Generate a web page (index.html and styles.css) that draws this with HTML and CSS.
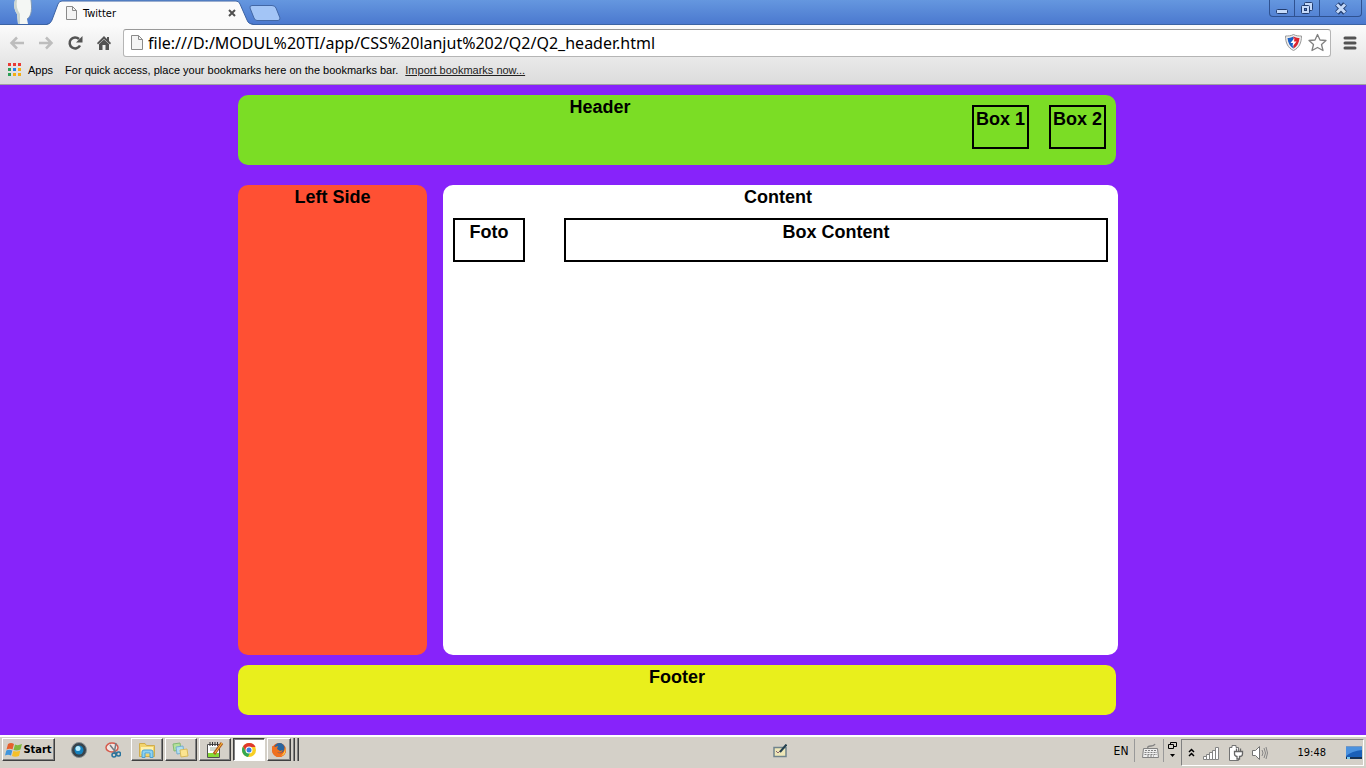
FILE: index.html
```html
<!DOCTYPE html>
<html lang="en">
<head>
    <meta charset="UTF-8">
    <meta name="viewport" content="width=device-width, initial-scale=1.0">
    <title>Twitter</title>
    <link rel="stylesheet" href="styles.css">
</head>
<body>

<!-- browser window -->
<div class="titlebar">
    <svg class="profile" width="24" height="24" viewBox="0 0 24 24">
        <path d="M3 0C1 6 3 11 5 14L6 24H16L15 19C20 16 20 8 19 0Z" fill="#f4f7f4"/>
        <path d="M3 0C1 6 3 11 5 14L6 24H8L8 14C5 10 4 5 5 0Z" fill="#cbd5cf"/>
        <path d="M19 0C20 8 20 16 15 19" fill="none" stroke="#7f98b5"/>
    </svg>
    <div class="tab">
        <svg class="tab-shape" width="206" height="25" viewBox="0 0 206 25">
            <path d="M0 25C3 24 4 22 5 20L11 4Q12 1 15 1H189Q192 1 193 4L200 20C201 23 203 24 206 25Z" fill="#fbfbfb"/>
            <path d="M0 24C3 24 4 22 5 20L11 4Q12 1 15 1H189Q192 1 193 4L200 20C201 23 203 24 206 24" fill="none" stroke="#3c63a4"/>
        </svg>
        <svg class="doc-icon" width="11" height="14" viewBox="0 0 11 14">
            <path d="M.5.5H6.5L10.5 4.500V13.500H.5Z" fill="#f4f4f4" stroke="#8a8a8a"/>
            <path d="M6.500.5V4.500H10.500" fill="none" stroke="#8a8a8a"/>
        </svg>
        <span class="tab-title">Twitter</span>
        <button class="tab-close" type="button" aria-label="Close tab">
            <svg width="8" height="8" viewBox="0 0 8 8"><path d="M1 1L7 7M7 1L1 7" stroke="#505050" stroke-width="2"/></svg>
        </button>
    </div>
    <button class="new-tab" type="button" aria-label="New tab">
        <svg width="32" height="16" viewBox="0 0 32 16"><path d="M3 .5H23Q26 .5 27 3L31 13Q31 15.500 29 15.500H8Q6 15.500 5 13L1 3Q.5.5 3 .5Z" fill="#a3c5f6" stroke="#4267a5"/></svg>
    </button>
    <div class="window-buttons">
        <button type="button" aria-label="Minimize">
            <svg width="14" height="14" viewBox="0 0 14 14"><rect x="1.500" y="8.500" width="11" height="4" rx="1" fill="#c5dafa" stroke="#233e70"/></svg>
        </button>
        <button type="button" aria-label="Restore">
            <svg width="14" height="14" viewBox="0 0 14 14">
                <rect x="4.500" y="1.500" width="8" height="8" rx="1" fill="#c5dafa" stroke="#233e70"/>
                <rect x="1.500" y="4.500" width="8" height="8" rx="1" fill="#c5dafa" stroke="#233e70"/>
                <rect x="4.500" y="7.500" width="2" height="2" fill="#4f80d3" stroke="#233e70"/>
            </svg>
        </button>
        <button class="wide" type="button" aria-label="Close">
            <svg width="14" height="14" viewBox="0 0 14 14"><path d="M3 3L11 12M11 3L3 12" stroke="#233e70" stroke-width="5"/><path d="M3 3.500L11 11.500M11 3.500L3 11.500" stroke="#c5dafa" stroke-width="3"/></svg>
        </button>
    </div>
</div>

<div class="toolbar">
    <button type="button" aria-label="Back">
        <svg width="16" height="16" viewBox="0 0 16 16"><path d="M15 8H3M8 2.500L2.500 8L8 13.500" fill="none" stroke="#bdbdbd" stroke-width="2.500"/></svg>
    </button>
    <button type="button" aria-label="Forward">
        <svg width="16" height="16" viewBox="0 0 16 16"><path d="M1 8H13M8 2.500L13.500 8L8 13.500" fill="none" stroke="#bdbdbd" stroke-width="2.500"/></svg>
    </button>
    <button type="button" aria-label="Reload">
        <svg width="16" height="16" viewBox="0 0 16 16"><path d="M12 4A5.500 5.500 0 1 0 13 10.500" fill="none" stroke="#535353" stroke-width="2.500"/><path d="M15.500 1V7.500H9Z" fill="#535353"/></svg>
    </button>
    <button type="button" aria-label="Home">
        <svg width="16" height="16" viewBox="0 0 16 16"><path d="M8 1L1 8L2 9.500L8 4L14 9.500L15 8L13 6V2H11V4Z" fill="#535353"/><path d="M3 9L8 4.500L13 9V15H9.500V10H6.500V15H3Z" fill="#535353"/></svg>
    </button>
    <div class="omnibox">
        <svg class="doc-icon" width="12" height="15" viewBox="0 0 12 15">
            <path d="M.5.5H7.500L11.500 4.500V14.500H.5Z" fill="#f4f4f4" stroke="#8a8a8a"/>
            <path d="M7.500.5V4.500H11.500" fill="none" stroke="#8a8a8a"/>
        </svg>
        <input type="text" aria-label="Address" value="file:///D:/MODUL%20TI/app/CSS%20lanjut%202/Q2/Q2_header.html">
        <svg width="17" height="17" viewBox="0 0 17 17">
            <path d="M8.500.5C6 2 3 2 .5 2C.5 9 3 14 8.500 16.500C14 14 16.500 9 16.500 2C14 2 11 2 8.500.5Z" fill="#eee" stroke="#999"/>
            <path d="M8.500 2.500C6 3.500 4 4 2.500 4C3 9 5 12.500 8.500 14.500Z" fill="#1c5fc4"/>
            <path d="M8.500 2.500C11 3.500 13 4 14.500 4C14 9 12 12.500 8.500 14.500Z" fill="#dc2430"/>
            <path d="M9.500 4L5.500 9H8L7.500 12.500L11.500 7.500H9Z" fill="#fff"/>
        </svg>
        <svg class="star" width="19" height="19" viewBox="0 0 19 19"><path d="M9.500 1.500L12 7L18 7.500L13.500 11.500L15 17.500L9.500 14.500L4 17.500L5.500 11.500L1 7.500L7 7Z" fill="#fff" stroke="#818181" stroke-width="1.300" stroke-linejoin="round"/></svg>
    </div>
    <button class="menu-button" type="button" aria-label="Menu">
        <svg width="14" height="14" viewBox="0 0 14 14"><path d="M2 2H12M2 7H12M2 12H12" stroke="#535353" stroke-width="3" stroke-linecap="round"/></svg>
    </button>
</div>

<div class="bookmarks">
    <svg width="14" height="14" viewBox="0 0 14 14">
        <path d="M0 0h3v3H0zM5 0h3v3H5zM10 0h3v3h-3z" fill="#e93b35"/>
        <path d="M0 5h3v3H0zM0 10h3v3H0z" fill="#2b9f56"/>
        <path d="M5 5h3v3H5z" fill="#2381e8"/>
        <path d="M10 5h3v3h-3zM5 10h3v3H5zM10 10h3v3h-3z" fill="#f3ae16"/>
    </svg>
    <span class="apps">Apps</span>
    <span>For quick access, place your bookmarks here on the bookmarks bar.</span>
    <a href="#">Import bookmarks now...</a>
</div>

<!-- web page -->
<div class="page">
    <div class="wrapper">
        <div class="header">
            <div class="header-title">Header</div>
            <div class="box">Box 1</div>
            <div class="box">Box 2</div>
        </div>
        <div class="main">
            <div class="left-side">Left Side</div>
            <div class="content">
                <div class="content-title">Content</div>
                <div class="content-row">
                    <div class="box foto">Foto</div>
                    <div class="box box-content">Box Content</div>
                </div>
            </div>
        </div>
        <div class="footer">Footer</div>
    </div>
</div>

<!-- taskbar -->
<div class="taskbar">
    <button class="start" type="button">
        <svg width="18" height="16" viewBox="0 0 18 16">
            <path d="M3 2Q6 0 9 2L7.500 7.500Q5 6 1.500 7.500Z" fill="#e6602c"/>
            <path d="M10 2.500Q13 4 17 2L15.500 7.500Q12 9 8.500 8Z" fill="#80b83c"/>
            <path d="M1.300 8.500Q4 7 7.300 8.500L6 13.500Q3 12 0 13.500Z" fill="#4095dc"/>
            <path d="M8.300 9Q12 10 15.300 8.500L14 14Q10 15.500 7 14Z" fill="#f5c029"/>
        </svg>
        <span>Start</span>
    </button>
    <div class="quick-launch">
        <svg width="16" height="16" viewBox="0 0 16 16">
            <circle cx="8" cy="8" r="7.500" fill="#39434a" stroke="#858e92"/>
            <circle cx="8" cy="8" r="4.500" fill="#1681bd"/>
            <circle cx="7" cy="6.500" r="2.500" fill="#b9edff"/>
        </svg>
        <svg width="16" height="16" viewBox="0 0 16 16">
            <ellipse cx="7" cy="5.500" rx="6" ry="4.500" fill="#f2e6e2" stroke="#d55a4c" stroke-width="1.500"/>
            <path d="M5 3L12 12M11 1L9 12" stroke="#737b83" stroke-width="1.500"/>
            <circle cx="9" cy="13" r="2" fill="none" stroke="#28739d" stroke-width="1.500"/>
            <circle cx="13.500" cy="12" r="2" fill="none" stroke="#28739d" stroke-width="1.500"/>
        </svg>
    </div>
    <div class="tasks">
        <button type="button" aria-label="Explorer">
            <svg width="18" height="16" viewBox="0 0 18 16">
                <path d="M1.500 1.500H7L8.500 3.500H16.500V14.500H1.500Z" fill="#f2d46c" stroke="#d0ac4c"/>
                <path d="M3 5H15V12H3Z" fill="#fff1ad"/>
                <path d="M4 15.500V10Q4 8 6 8H13Q15 8 15 10V15.500H12V11H7V15.500Z" fill="#8bd2f2" stroke="#4e9fce"/>
            </svg>
        </button>
        <button type="button" aria-label="Sticky Notes">
            <svg width="18" height="16" viewBox="0 0 18 16">
                <path d="M1 2L8 1L9 8L2 9Z" fill="#b4e29a" stroke="#83b974"/>
                <path d="M4 5L11 4L12 11L5 12Z" fill="#b1def0" stroke="#77afd0"/>
                <path d="M8 8L15 7L16 14L9 15Z" fill="#fbe490" stroke="#d6b95b"/>
            </svg>
        </button>
        <button type="button" aria-label="Notepad++">
            <svg width="18" height="16" viewBox="0 0 18 16">
                <path d="M1.500 2.500H13.500V15.500H1.500Z" fill="#fff" stroke="#505050"/>
                <path d="M2 11H13V15H2Z" fill="#86d936"/>
                <path d="M4 0V4M6.500 0V4M9 0V4M11.500 0V4" stroke="#333"/>
                <path d="M4 6H11M4 8H9" stroke="#9cad9a"/>
                <path d="M16 1L8 12" stroke="#b15c20" stroke-width="3"/><path d="M16 1L9 11" stroke="#ffc63b"/>
            </svg>
        </button>
        <button class="active" type="button" aria-label="Chrome">
            <svg width="16" height="16" viewBox="0 0 16 16">
                <circle cx="8" cy="8" r="7" fill="#f7cf24"/>
                <path d="M2 4.500A7 7 0 0 1 14.500 5H8L5 9.500Z" fill="#df392e"/>
                <path d="M2 4.500L5.500 10.500L9 11L7 15A7 7 0 0 1 2 4.500Z" fill="#35a853"/>
                <circle cx="8" cy="8" r="3.500" fill="#fff"/><circle cx="8" cy="8" r="2.500" fill="#377fe2"/>
            </svg>
        </button>
        <button class="stacked" type="button" aria-label="Firefox">
            <svg width="16" height="16" viewBox="0 0 16 16">
                <circle cx="8" cy="8" r="7" fill="#e35b18"/>
                <circle cx="8.500" cy="6" r="5" fill="#28659f"/>
                <path d="M1 4L4 5L7 4L6 7L9 9L12 8Q10 12 6 10Q8 13 12 11Q15 8 14 4Q17 12 10 15Q2 16 1 8Z" fill="#ef7120"/>
                <path d="M14 5Q16 12 10 14Q14 11 14 5Z" fill="#ffd04a"/>
            </svg>
        </button>
        <span class="stack-edge"></span>
        <span class="stack-edge"></span>
    </div>
    <svg class="tablet-icon" width="14" height="14" viewBox="0 0 14 14">
        <rect x="1" y="3.500" width="12" height="9" fill="#eee7b8" stroke="#70848d" stroke-width="1.500"/>
        <path d="M3 7L5 9L7 7" fill="none" stroke="#8c6570"/>
        <path d="M13.500.5L7 8" stroke="#233f4e" stroke-width="2"/>
    </svg>
    <div class="language">
        <span>EN</span>
        <svg class="keyboard" width="17" height="15" viewBox="0 0 17 15">
            <path d="M1.500 5.500H15.500L16.500 14.500H.5Z" fill="#eee" stroke="#828282"/>
            <path d="M3 7.500H15M2.500 9.500H15M2.500 11.500H15M5 13H12" stroke="#828282" stroke-dasharray="2 1"/>
            <path d="M6 5Q5 3 9 3Q12 3 13 1" fill="none" stroke="#828282" stroke-width="1.500"/>
        </svg>
        <svg class="restore" width="9" height="17" viewBox="0 0 9 17">
            <path d="M2.500.5H8.500V4.500H2.500Z" fill="#d4d0c8" stroke="#000"/>
            <path d="M.5 2.500H5.500V6.500H.5Z" fill="#d4d0c8" stroke="#000"/>
            <path d="M2 12H7L4.500 15Z"/>
        </svg>
    </div>
    <div class="tray">
        <svg width="7" height="10" viewBox="0 0 7 10"><path d="M1 4L3.500 1.500L6 4M1 8L3.500 5.500L6 8" fill="none" stroke="#000" stroke-width="1.500"/></svg>
        <svg width="17" height="14" viewBox="0 0 17 14"><path d="M.5 10.500h3v3h-3zM3.500 8.500h3v5h-3zM6.500 6.500h3v7h-3zM9.500 4.500h3v9h-3zM12.500 1.500h3v12h-3z" fill="#fff" stroke="#848484"/></svg>
        <svg width="16" height="16" viewBox="0 0 16 16">
            <path d="M1.500 2.500H4V.5H8V2.500H10.500V15.500H1.500Z" fill="#fff" stroke="#737373"/>
            <path d="M8.500 6V3.500M12.500 6V3.500M6.500 6.500H14.500V9Q14.500 11.500 11.500 11.500V14H9V11.500Q6.500 11 6.500 9Z" fill="#fff" stroke="#666" stroke-width="1.300"/>
        </svg>
        <svg width="17" height="16" viewBox="0 0 17 16">
            <path d="M.5 5.500H3.500L7.500 1.500V14.500L3.500 10.500H.5Z" fill="#fff" stroke="#737373"/>
            <path d="M10 5Q12 8 10 11M12 3Q15 8 12 13M14 2Q17 8 14 14" fill="none" stroke="#858585"/>
        </svg>
        <span class="clock">19:48</span>
        <svg class="desktop" width="16" height="14" viewBox="0 0 16 14">
            <path d="M0 .5H16V12H0Z" fill="#1b60b8"/>
            <path d="M0 1H16V4Q6 5 0 10Z" fill="#4b92df"/>
            <path d="M0 11H16V13H0Z" fill="#173253"/><path d="M1 11H4V13H1Z" fill="#7cccf1"/>
        </svg>
    </div>
</div>

</body>
</html>
```
FILE: styles.css
```css
* {
    box-sizing: border-box;
}
body {
    margin: 0;
    min-height: 100vh;
    display: flex;
    flex-direction: column;
    font-family: "DejaVu Sans Condensed", Tahoma, sans-serif;
    font-size: 11px;
    color: #000;
}
svg {
    display: block;
    flex: none;
}
button {
    display: flex;
    align-items: center;
    justify-content: center;
    padding: 0;
    border: none;
    background: none;
    font-family: inherit;
}

/* browser */
.titlebar {
    display: flex;
    height: 25px;
    padding-right: 4px;
    background: linear-gradient(#6597df, #4b79cf);
    border-bottom: 1px solid #3c63a4;
}
.profile {
    margin-left: 12px;
}
.tab {
    position: relative;
    display: flex;
    align-items: center;
    width: 206px;
    height: 25px;
    margin-left: 11px;
    padding: 1px 17px 0 19px;
}
.tab-shape {
    position: absolute;
    left: 0;
    top: 0;
}
.tab .doc-icon,
.tab-title,
.tab-close {
    position: relative;
}
.tab-title {
    flex: 1;
    margin-left: 6px;
}
.new-tab {
    height: 16px;
    margin-top: 5px;
    margin-left: -4px;
}
.window-buttons {
    display: flex;
    height: 17px;
    margin-left: auto;
    border: 1px solid #2f5291;
    border-top: none;
    border-radius: 0 0 4px 4px;
}
.window-buttons button {
    width: 25px;
    border-right: 1px solid #2f5291;
}
.window-buttons .wide {
    width: 41px;
    border-right: none;
}
.toolbar {
    display: flex;
    align-items: center;
    height: 33px;
    padding: 2px 9px 0 9px;
    background: linear-gradient(#fbfbfb, #e9e9e9);
}
.toolbar button {
    width: 16px;
    margin-right: 13px;
}
.omnibox {
    display: flex;
    flex: 1;
    align-items: center;
    height: 28px;
    margin-left: -2px;
    padding: 0 3px 0 7px;
    background: #fff;
    border: 1px solid #b5b5b5;
    border-top-color: #999;
    border-radius: 3px;
}
.omnibox input {
    flex: 1;
    min-width: 0;
    padding: 0 5px;
    border: none;
    outline: none;
    background: none;
    font-family: "Noto Sans", Tahoma, sans-serif;
    font-size: 16px;
}
.star {
    margin-left: 6px;
}
.toolbar .menu-button {
    width: 14px;
    margin: 0 0 0 12px;
}
.bookmarks {
    display: flex;
    align-items: center;
    height: 27px;
    padding: 0 8px 2px;
    background: linear-gradient(#e9e9e9, #dcdcdc);
    border-bottom: 1px solid #a0a0a0;
    font-family: "Liberation Sans", Arial, sans-serif;
}
.apps {
    margin: 0 12px 0 6px;
}
.bookmarks a {
    margin-left: 7px;
    color: #222;
}

/* page */
.page {
    flex: 1;
    padding: 10px;
    background: #8723fa;
    font-family: "Liberation Sans", Arial, sans-serif;
    font-size: 18px;
    font-weight: bold;
    line-height: 24px;
    text-align: center;
}
.wrapper {
    max-width: 890px;
    margin: 0 auto;
}
.header,
.footer {
    margin-right: 12px;
    border-radius: 10px;
}
.header {
    display: flex;
    gap: 20px;
    min-height: 70px;
    padding-right: 10px;
    background: #7bdd25;
}
.header-title {
    flex: 1;
    margin-right: -10px;
}
.box {
    width: 57px;
    height: 44px;
    border: 2px solid #000;
    white-space: nowrap;
}
.header .box {
    margin-top: 10px;
}
.main {
    display: flex;
    gap: 16px;
    margin: 20px 10px 10px 0;
}
.left-side {
    width: 189px;
    background: #ff5033;
    border-radius: 10px;
}
.content {
    flex: 1;
    min-height: 470px;
    background: #fff;
    border-radius: 10px;
}
.content-title {
    margin-right: 5px;
}
.content-row {
    display: flex;
    gap: 39px;
    padding: 9px 10px;
}
.foto {
    width: 72px;
}
.box-content {
    flex: 1;
}
.footer {
    min-height: 50px;
    background: #e9ef1c;
}

/* taskbar */
.taskbar {
    display: flex;
    align-items: center;
    height: 33px;
    padding: 0 2px;
    background: #d4d0c8;
    border-top: 2px solid #fff;
}
.start,
.tasks button {
    height: 23px;
    border: 1px solid;
    border-color: #fff #404040 #404040 #fff;
    box-shadow: inset -1px -1px #808080;
    background: #d4d0c8;
}
.start {
    width: 53px;
    margin-bottom: 6px;
    font-size: 11px;
    font-weight: bold;
}
.quick-launch {
    display: flex;
    gap: 18px;
    margin: 0 10px 6px 16px;
}
.tasks {
    display: flex;
    gap: 2px;
    margin-bottom: 6px;
}
.tasks button {
    width: 32px;
}
.tasks .active {
    background: #fff;
    border-color: #404040 #fff #fff #404040;
    box-shadow: inset 1px 1px #808080;
}
.tasks .stacked {
    width: 24px;
}
.stack-edge {
    width: 2px;
    border-right: 1px solid #404040;
    border-left: 1px solid #808080;
}
.tablet-icon {
    margin: 0 24% 4px auto;
}
.language {
    display: flex;
    align-items: center;
    height: 27px;
    margin-bottom: 4px;
    font-size: 12px;
}
.keyboard {
    box-sizing: content-box;
    margin-left: 6px;
    padding: 4px 4px 4px 7px;
    border: 1px solid #999;
    border-top: none;
    border-bottom: none;
}
.restore {
    margin: 0 4px;
}
.tray {
    display: flex;
    align-items: center;
    gap: 8px;
    height: 27px;
    padding: 0 1px 0 6px;
    border: 1px solid;
    border-color: #808080 #fff #fff #808080;
}
.clock {
    margin: 0 12px 0 20px;
}
```
